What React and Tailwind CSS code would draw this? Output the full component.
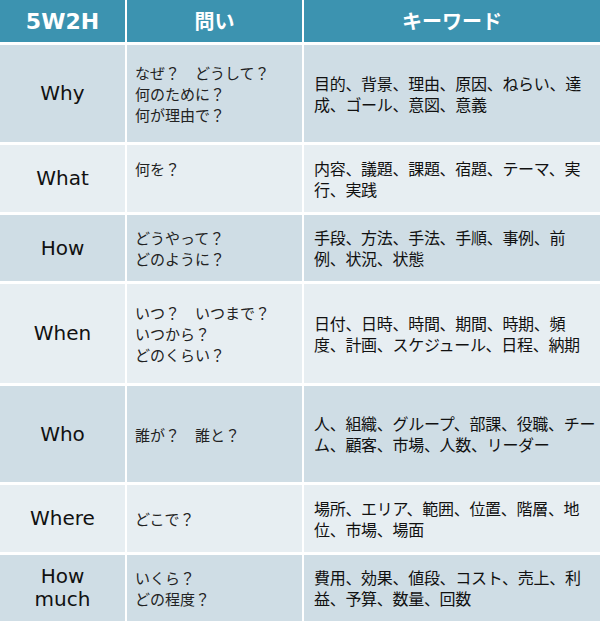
import React from "react";

const rows = [
  { w: ["Why"], q: ["なぜ？　どうして？", "何のために？", "何が理由で？"], k: ["目的、背景、理由、原因、ねらい、達", "成、ゴール、意図、意義"], dark: true },
  { w: ["What"], q: ["何を？", "\u00a0"], k: ["内容、議題、課題、宿題、テーマ、実", "行、実践"], dark: false },
  { w: ["How"], q: ["どうやって？", "どのように？"], k: ["手段、方法、手法、手順、事例、前", "例、状況、状態"], dark: true },
  { w: ["When"], q: ["いつ？　いつまで？", "いつから？", "どのくらい？"], k: ["日付、日時、時間、期間、時期、頻", "度、計画、スケジュール、日程、納期"], dark: false },
  { w: ["Who"], q: ["誰が？　誰と？"], k: ["人、組織、グループ、部課、役職、チー", "ム、顧客、市場、人数、リーダー"], dark: true },
  { w: ["Where"], q: ["どこで？"], k: ["場所、エリア、範囲、位置、階層、地", "位、市場、場面"], dark: false },
  { w: ["How", "much"], q: ["いくら？", "どの程度？"], k: ["費用、効果、値段、コスト、売上、利", "益、予算、数量、回数"], dark: true },
];

export default function App() {
  return (
    <div className="w-[600px] h-[621px] bg-white overflow-hidden">
      <div className="grid grid-cols-[125px_175px_296px] grid-rows-[42px_97px_67px_66px_99px_96px_67px_66px] gap-x-[2px] gap-y-[3px] bg-white">
        <div className="bg-[#3c93b0] flex items-center justify-center text-white font-bold text-[22px] font-['DejaVu_Sans',sans-serif]">5W2H</div>
        <div className="bg-[#3c93b0] flex items-center justify-center text-white font-bold text-[20px] font-['Noto_Sans_CJK_JP',sans-serif]">問い</div>
        <div className="bg-[#3c93b0] flex items-center justify-center text-white font-bold text-[20px] font-['Noto_Sans_CJK_JP',sans-serif]">キーワード</div>
        {rows.map((r, i) => (
          <React.Fragment key={i}>
            <div className={`${r.dark ? "bg-[#cfdde5]" : "bg-[#e7eef2]"} flex flex-col items-center justify-center text-[20px] leading-[23px] text-[#111] font-['DejaVu_Sans',sans-serif]`}>
              {r.w.map((t, j) => <div key={j}>{t}</div>)}
            </div>
            <div className={`${r.dark ? "bg-[#cfdde5]" : "bg-[#e7eef2]"} flex flex-col justify-center pl-[8px] text-[15px] leading-[21px] text-[#222] font-['Noto_Sans_CJK_JP',sans-serif]`}>
              {r.q.map((t, j) => <div key={j} className="whitespace-nowrap">{t}</div>)}
            </div>
            <div className={`${r.dark ? "bg-[#cfdde5]" : "bg-[#e7eef2]"} flex flex-col justify-center pl-[10px] text-[16px] leading-[21px] tracking-[-0.3px] text-[#111] font-['Noto_Sans_CJK_JP',sans-serif]`}>
              {r.k.map((t, j) => <div key={j} className="whitespace-nowrap">{t}</div>)}
            </div>
          </React.Fragment>
        ))}
      </div>
    </div>
  );
}
